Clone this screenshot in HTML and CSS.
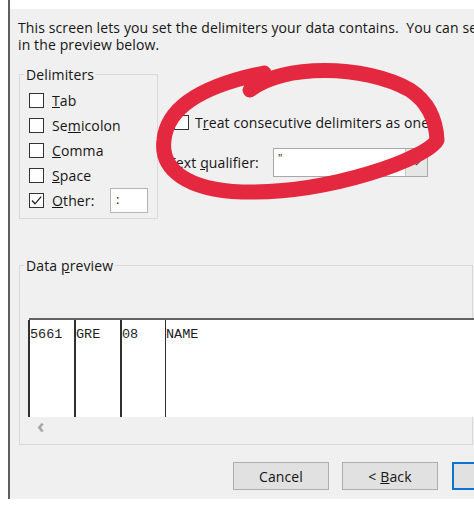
FILE: index.html
```html
<!DOCTYPE html>
<html>
<head>
<meta charset="utf-8">
<link rel="stylesheet" href="styles.css">
</head>
<body>
<div class="frame">
  <div class="dialog">
    <p class="intro">This screen lets you set the delimiters your data contains.&nbsp; You can see how your text is affected<br>in the preview below.</p>
    <div class="top">
      <fieldset class="group delims">
        <legend>Delimiters</legend>
        <div class="opt"><span class="cb"></span><span><u>T</u>ab</span></div>
        <div class="opt"><span class="cb"></span><span>Se<u>m</u>icolon</span></div>
        <div class="opt"><span class="cb"></span><span><u>C</u>omma</span></div>
        <div class="opt"><span class="cb"></span><span><u>S</u>pace</span></div>
        <div class="opt"><span class="cb"><svg viewBox="0 0 13 13" width="13" height="13"><path d="M2 6.5 L5 9.8 L11.2 2.6" fill="none" stroke="#222" stroke-width="1.3"/></svg></span><span class="other-label"><u>O</u>ther:</span><span class="other-input">:</span></div>
      </fieldset>
      <div class="options">
        <div class="opt treat"><span class="cb"></span><span>T<u>r</u>eat consecutive delimiters as one</span></div>
        <div class="qual">
          <span class="qual-label">Text <u>q</u>ualifier:</span>
          <div class="select"><span class="val">"</span><span class="drop"><svg viewBox="0 0 10 6" width="9" height="6"><path d="M1 1 L5 5 L9 1" fill="none" stroke="#444" stroke-width="1.2"/></svg></span></div>
        </div>
      </div>
    </div>
    <fieldset class="group preview">
      <legend>Data <u>p</u>review</legend>
      <div class="grid">
        <div class="col c1">5661</div>
        <div class="col c2">GRE</div>
        <div class="col c3">08</div>
        <div class="col c4">NAME</div>
      </div>
      <div class="scroll"><span class="arrow">&lsaquo;</span></div>
    </fieldset>
    <div class="buttons">
      <button class="btn">Cancel</button>
      <button class="btn">&lt; <u>B</u>ack</button>
      <button class="btn primary"><u>N</u>ext &gt;</button>
    </div>
  </div>
</div>
<svg class="ink" width="474" height="514" viewBox="0 0 474 514">
  <path d="M 250 90 C 282 64, 364 64, 410 90 C 428 102, 436 120, 437 140 C 428 158, 330 194, 242 192 C 188 190, 160 170, 164 140 C 167 108, 200 86, 264 73" fill="none" stroke="#e4283f" stroke-width="15" stroke-linecap="round" stroke-linejoin="round"/>
</svg>
</body>
</html>
```

FILE: styles.css
```css
html, body {
  margin: 0;
  padding: 0;
  background: #ffffff;
  overflow: hidden;
}

body {
  width: 474px;
  height: 514px;
  position: relative;
  font-family: "Open Sans", "Noto Sans", sans-serif;
  font-size: 14px;
  line-height: 17px;
  letter-spacing: 0.12px;
  color: #151515;
}

.frame {
  margin-left: 8px;
  border-left: 2px solid #5e5e5e;
  height: 499px;
  padding-top: 9px;
  box-sizing: border-box;
}

.dialog {
  background: #f0f0f0;
  height: 490px;
  overflow: hidden;
  white-space: nowrap;
}

.intro {
  margin: 0;
  padding: 10px 0 0 8px;
}

.top {
  display: flex;
  margin-top: 13px;
}

.group {
  margin: 0;
  border: 1px solid #d9d9d9;
  min-width: 0;
  box-sizing: border-box;
}

.group legend {
  padding: 0 2px;
  margin-left: -5px;
  line-height: 17px;
}

.delims {
  margin-left: 9px;
  width: 139px;
  padding: 5px 0 5px 9px;
}

.opt {
  display: flex;
  align-items: center;
  height: 25px;
}

.cb {
  width: 13px;
  height: 13px;
  border: 1px solid #333;
  background: #fff;
  display: flex;
  align-items: center;
  justify-content: center;
  margin-right: 8px;
  flex: none;
}

.other-label {
  width: 58px;
}

.other-input {
  border: 1px solid #b4b4b4;
  background: #fff;
  line-height: 21px;
  padding-left: 5px;
  box-sizing: border-box;
  width: 38px;
  height: 25px;
  font-size: 13px;
}

.options {
  margin-left: 10px;
  display: flex;
  flex-direction: column;
}

.treat {
  margin-top: 48px;
  height: 17px;
  padding-left: 6px;
}

.treat .cb {
  margin-right: 6px;
}

.qual {
  display: flex;
  align-items: center;
  margin-top: 17px;
}

.qual-label {
  width: 105px;
}

.select {
  width: 155px;
  height: 29px;
  border: 1px solid #a8a8a8;
  background: #fff;
  box-sizing: border-box;
  display: flex;
}

.select .val {
  flex: 1;
  padding-left: 4px;
  font-size: 11px;
  line-height: 18px;
}

.select .drop {
  width: 21px;
  background: #e6e6e6;
  border-left: 1px solid #c8c8c8;
  display: flex;
  align-items: center;
  justify-content: center;
}

.preview {
  margin: 38px 0 0 9px;
  width: 454px;
  padding: 44px 0 9px 9px;
}

.grid {
  display: flex;
  width: 470px;
  height: 99px;
  background: #fff;
  border-top: 2px solid #626262;
  box-sizing: border-box;
  font-family: "Liberation Mono", "Courier New", monospace;
  font-size: 13.5px;
  line-height: 16px;
  letter-spacing: 0;
  color: #1e1e1e;
}

.col {
  border-left: 2px solid #303030;
  box-sizing: border-box;
  padding-top: 7px;
}

.c1 { width: 46px; margin-left: -1px; }
.c2 { width: 46px; }
.c3 { width: 45px; }
.c4 { flex: 1; border-left-width: 1px; }

.scroll {
  height: 18px;
  display: flex;
  align-items: center;
  padding-left: 8px;
}

.arrow {
  color: #a5a5a5;
  font-size: 20px;
  line-height: 18px;
  font-weight: bold;
}

.buttons {
  display: flex;
  gap: 13px;
  margin-top: 17px;
  padding-left: 223px;
}

.btn {
  flex: none;
  width: 96px;
  height: 28px;
  background: #e1e1e1;
  border: 1px solid #adadad;
  font-family: "Open Sans", "Noto Sans", sans-serif;
  font-size: 14px;
  letter-spacing: 0.12px;
  color: #151515;
  padding: 0;
}

.btn.primary {
  border: 2px solid #0a74d4;
  margin-left: 1px;
}

.ink {
  position: absolute;
  left: 0;
  top: 0;
  pointer-events: none;
}
```
